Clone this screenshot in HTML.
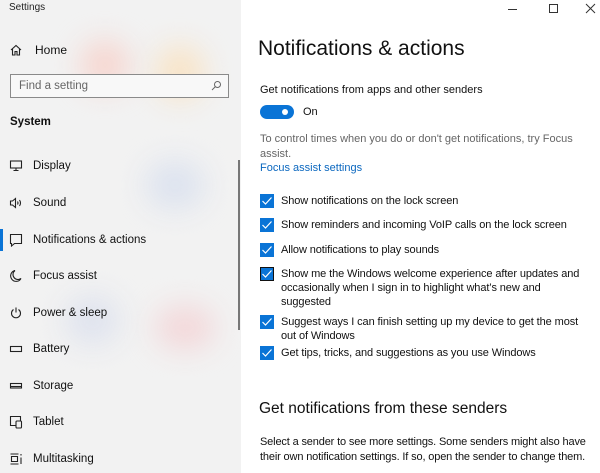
<!DOCTYPE html>
<html><head><meta charset="utf-8"><style>
*{margin:0;padding:0;box-sizing:border-box}
body{width:600px;height:473px;overflow:hidden;background:#fff;font-family:"Liberation Sans",sans-serif;color:#111;position:relative}
.a{position:absolute;white-space:nowrap}
#side{position:absolute;left:0;top:0;width:241px;height:473px;background:#f2f2f2;overflow:hidden}
.blob{position:absolute;border-radius:50%;filter:blur(14px)}
.t{font-size:11.5px;line-height:14px}
.it{position:absolute;left:33px;font-size:11.5px;line-height:14px}
.ic{position:absolute;left:9px;width:14px;height:14px}
.cb{position:absolute;left:260px;width:14px;height:14px;background:#0a74d6}
.cb svg{position:absolute;left:1px;top:1px}
.ct{position:absolute;left:281px;font-size:11px;line-height:14px;color:#111;letter-spacing:-0.1px}
</style></head><body>
<div id="side">
<div class="blob" style="left:80px;top:40px;width:50px;height:50px;background:#f6d6d0"></div>
<div class="blob" style="left:155px;top:45px;width:50px;height:55px;background:#f8e4c8"></div>
<div class="blob" style="left:145px;top:160px;width:60px;height:50px;background:#dde3ef"></div>
<div class="blob" style="left:65px;top:295px;width:55px;height:50px;background:#dfe3ee"></div>
<div class="blob" style="left:155px;top:305px;width:60px;height:45px;background:#f3d8da"></div>
<div class="a" style="left:9px;top:2px;font-size:10px;color:#222">Settings</div>
<svg class="ic" style="top:43px" viewBox="0 0 14 14" fill="none" stroke="#222" stroke-width="1.1"><path d="M2 7 L7 2.5 L12 7 M3.5 6 V12 H6 V8.5 H8 V12 H10.5 V6"/></svg>
<div class="a t" style="left:35px;top:43px;font-size:12px">Home</div>
<div class="a" style="left:10px;top:74px;width:219px;height:24px;border:1.5px solid #8a8a8a;background:#f8f8f8"></div>
<div class="a t" style="left:19px;top:79px;color:#666">Find a setting</div>
<svg class="a" style="left:211px;top:80px" width="11" height="11" viewBox="0 0 11 11" fill="none" stroke="#666"><circle cx="6.5" cy="4.5" r="3"/><path d="M4.5 6.5 L1 10"/></svg>
<div class="a t" style="left:10px;top:115px;font-weight:bold">System</div>
<div class="a" style="left:238px;top:160px;width:2px;height:170px;background:#777"></div>
<div class="a" style="left:0;top:229px;width:3px;height:22px;background:#0a74d6"></div>
<svg class="ic" style="top:159px" viewBox="0 0 14 14" fill="none" stroke="#222" stroke-width="1.1"><rect x="1.5" y="2" width="11" height="7"/><path d="M7 9v2.5M4.5 11.5h5"/></svg>
<div class="it" style="top:159px">Display</div>
<svg class="ic" style="top:196px" viewBox="0 0 14 14" fill="none" stroke="#222" stroke-width="1.1"><path d="M1.5 5h2l3-2.5v9l-3-2.5h-2z M8.5 5.5q1 1.5 0 3 M10.5 4q2 3 0 6"/></svg>
<div class="it" style="top:196px">Sound</div>
<svg class="ic" style="top:233px" viewBox="0 0 14 14" fill="none" stroke="#222" stroke-width="1.1"><path d="M1.5 1.5h11v9h-7l-3 2.5v-2.5h-1z"/></svg>
<div class="it" style="top:233px">Notifications &amp; actions</div>
<svg class="ic" style="top:269px" viewBox="0 0 14 14" fill="none" stroke="#222" stroke-width="1.1"><path d="M6 1.5a5.5 5.5 0 1 0 6 8a5 5 0 0 1 -6 -8z"/></svg>
<div class="it" style="top:269px">Focus assist</div>
<svg class="ic" style="top:306px" viewBox="0 0 14 14" fill="none" stroke="#222" stroke-width="1.1"><path d="M7 1.5v5 M4.5 3.5a4.5 4.5 0 1 0 5 0"/></svg>
<div class="it" style="top:306px">Power &amp; sleep</div>
<svg class="ic" style="top:342px" viewBox="0 0 14 14" fill="none" stroke="#222" stroke-width="1.1"><rect x="1.5" y="4.5" width="11" height="5"/></svg>
<div class="it" style="top:342px">Battery</div>
<svg class="ic" style="top:379px" viewBox="0 0 14 14" fill="none" stroke="#222" stroke-width="1.1"><rect x="1.5" y="4.5" width="11" height="4.5"/><path d="M2 7.5h10"/></svg>
<div class="it" style="top:379px">Storage</div>
<svg class="ic" style="top:415px" viewBox="0 0 14 14" fill="none" stroke="#222" stroke-width="1.1"><path d="M7 10.5h-5.5v-9h10v4.5"/><rect x="7" y="6" width="5.5" height="7" rx="1"/></svg>
<div class="it" style="top:415px">Tablet</div>
<svg class="ic" style="top:452px" viewBox="0 0 14 14" fill="none" stroke="#222" stroke-width="1.1"><path d="M1.5 2h8M1.5 12h8M2.5 4.5h6v5h-6z M12 2v1.5M12 5.5v6.5"/></svg>
<div class="it" style="top:452px">Multitasking</div>
</div>
<svg class="a" style="left:506px;top:2px" width="90" height="12" viewBox="0 0 90 12" fill="none" stroke="#333" stroke-width="1"><path d="M2 7.5h9"/><rect x="43.5" y="2.5" width="8" height="8"/><path d="M80 2l9 9M89 2l-9 9"/></svg>
<div class="a" style="left:258px;top:36px;font-size:21px;line-height:26px;color:#111">Notifications &amp; actions</div>
<div class="a t" style="left:260px;top:83px;font-size:11px">Get notifications from apps and other senders</div>
<div class="a" style="left:260px;top:105px;width:34px;height:14px;border-radius:7px;background:#0a74d6"></div>
<div class="a" style="left:282px;top:109px;width:6px;height:6px;border-radius:50%;background:#fff"></div>
<div class="a t" style="left:303px;top:105px;font-size:11px">On</div>
<div class="a t" style="left:260px;top:132px;color:#666;font-size:11px;line-height:14.5px;white-space:normal;width:330px">To control times when you do or don't get notifications, try Focus assist.</div>
<div class="a t" style="left:260px;top:161px;color:#0a67bf;font-size:11px">Focus assist settings</div>
<div class="cb" style="top:194px"><svg width="12" height="12" viewBox="0 0 12 12" fill="none" stroke="#fff" stroke-width="1.2"><path d="M1.5 6l3 3l6-6.5"/></svg></div>
<div class="ct" style="top:194px">Show notifications on the lock screen</div>
<div class="cb" style="top:218px"><svg width="12" height="12" viewBox="0 0 12 12" fill="none" stroke="#fff" stroke-width="1.2"><path d="M1.5 6l3 3l6-6.5"/></svg></div>
<div class="ct" style="top:218px">Show reminders and incoming VoIP calls on the lock screen</div>
<div class="cb" style="top:243px"><svg width="12" height="12" viewBox="0 0 12 12" fill="none" stroke="#fff" stroke-width="1.2"><path d="M1.5 6l3 3l6-6.5"/></svg></div>
<div class="ct" style="top:243px">Allow notifications to play sounds</div>
<div class="cb" style="top:267px;border:1.5px solid #111"><svg style="left:0;top:0" width="12" height="12" viewBox="0 0 12 12" fill="none" stroke="#fff" stroke-width="1.2"><path d="M1.5 6l3 3l6-6.5"/></svg></div>
<div class="ct" style="top:267px;white-space:normal;width:300px">Show me the Windows welcome experience after updates and occasionally when I sign in to highlight what’s new and suggested</div>
<div class="cb" style="top:315px"><svg width="12" height="12" viewBox="0 0 12 12" fill="none" stroke="#fff" stroke-width="1.2"><path d="M1.5 6l3 3l6-6.5"/></svg></div>
<div class="ct" style="top:315px;white-space:normal;width:300px">Suggest ways I can finish setting up my device to get the most out of Windows</div>
<div class="cb" style="top:346px"><svg width="12" height="12" viewBox="0 0 12 12" fill="none" stroke="#fff" stroke-width="1.2"><path d="M1.5 6l3 3l6-6.5"/></svg></div>
<div class="ct" style="top:346px">Get tips, tricks, and suggestions as you use Windows</div>
<div class="a" style="left:259px;top:399px;font-size:15.5px;line-height:20px">Get notifications from these senders</div>
<div class="a t" style="left:260px;top:435px;font-size:11px;letter-spacing:-0.15px;line-height:15px;white-space:normal;width:340px">Select a sender to see more settings. Some senders might also have their own notification settings. If so, open the sender to change them.</div>
</body></html>
